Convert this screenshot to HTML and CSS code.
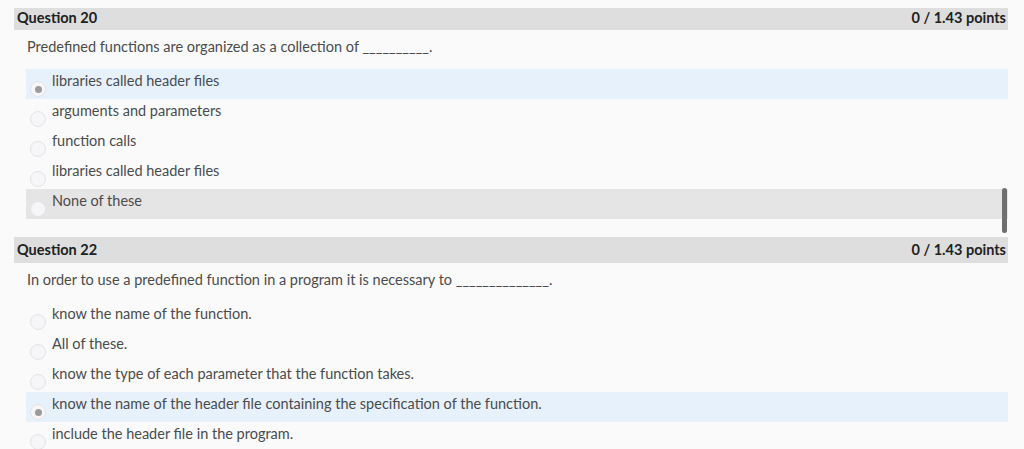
FILE: index.html
```html
<!DOCTYPE html>
<html>
<head>
<meta charset="utf-8">
<link rel="stylesheet" href="styles.css">
</head>
<body>
<div class="quiz">
  <section class="question">
    <div class="qhead first"><span>Question 20</span><span>0 / 1.43 points</span></div>
    <p class="qtext">Predefined functions are organized as a collection of __________.</p>
    <ul class="options">
      <li class="opt selected"><span class="radio on"></span><span>libraries called header files</span></li>
      <li class="opt"><span class="radio"></span><span>arguments and parameters</span></li>
      <li class="opt"><span class="radio"></span><span>function calls</span></li>
      <li class="opt"><span class="radio"></span><span>libraries called header files</span></li>
      <li class="opt hover"><span class="radio"></span><span>None of these</span></li>
    </ul>
  </section>
  <section class="question">
    <div class="qhead"><span>Question 22</span><span>0 / 1.43 points</span></div>
    <p class="qtext">In order to use a predefined function in a program it is necessary to ______________.</p>
    <ul class="options">
      <li class="opt"><span class="radio"></span><span>know the name of the function.</span></li>
      <li class="opt"><span class="radio"></span><span>All of these.</span></li>
      <li class="opt"><span class="radio"></span><span>know the type of each parameter that the function takes.</span></li>
      <li class="opt selected"><span class="radio on"></span><span>know the name of the header file containing the specification of the function.</span></li>
      <li class="opt"><span class="radio"></span><span>include the header file in the program.</span></li>
    </ul>
  </section>
  <div class="scrollbar"></div>
</div>
</body>
</html>
```
FILE: styles.css
```css
html, body {
  margin: 0;
  padding: 0;
  background: #fafafb;
  font-family: Lato, "Open Sans", sans-serif;
  color: #494c4e;
}
.quiz {
  position: relative;
  padding: 8px 16px 0 14px;
}
.question {
  margin-bottom: 18px;
}
.qhead {
  display: flex;
  justify-content: space-between;
  background: #dedede;
  height: 26px;
  line-height: 26px;
  padding: 0 2px 0 3px;
  font-weight: 700;
  font-size: 14.5px;
  color: #202122;
}
.qhead.first {
  height: 22px;
  line-height: 19px;
}
.qtext {
  margin: 0;
  padding: 9px 0 0 13px;
  line-height: 16px;
  height: 16px;
  font-size: 14.5px;
  color: #494c4e;
}
.options {
  list-style: none;
  margin: 14px 0 0 12px;
  padding: 0;
}
.opt {
  display: flex;
  align-items: flex-start;
  height: 30px;
  box-sizing: border-box;
  padding: 4px 0 0 4px;
  font-size: 14.5px;
  line-height: 16px;
  color: #494c4e;
}
.opt.selected {
  background: #e7f1fb;
}
.opt.hover {
  background: #e5e5e5;
}
.radio {
  flex: none;
  width: 16px;
  height: 16px;
  box-sizing: border-box;
  margin: 8px 6px 0 0;
  border-radius: 50%;
  border: 1px solid #e4e4e8;
  background: #f6f6f8;
  display: flex;
  align-items: center;
  justify-content: center;
}
.radio.on::after {
  content: "";
  width: 7px;
  height: 7px;
  border-radius: 50%;
  background: #9b9b9d;
}
.scrollbar {
  position: absolute;
  left: 1002px;
  top: 188px;
  width: 5px;
  height: 45px;
  border-radius: 3px;
  background: #6f6f6f;
}
```
